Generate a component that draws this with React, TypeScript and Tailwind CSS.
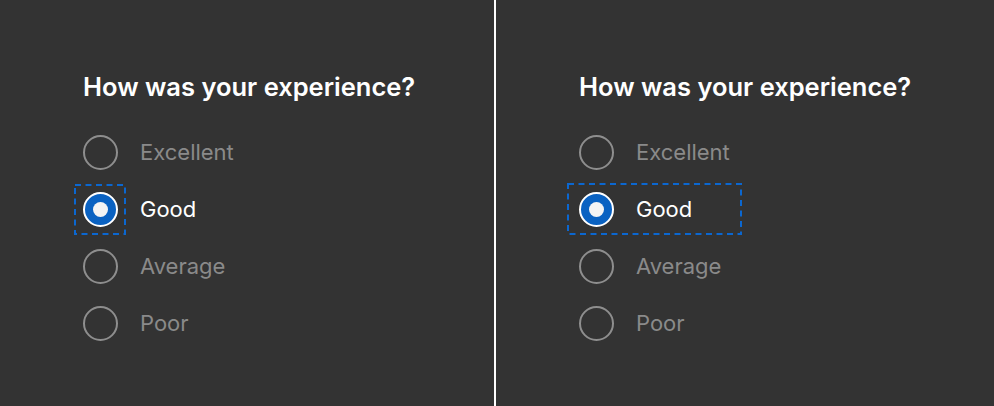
import React from 'react';

const options = ['Excellent', 'Good', 'Average', 'Poor'];

function FocusRing({ width, height }: { width: number; height: number }) {
  return (
    <svg width={width} height={height} className="pointer-events-none" fill="none">
      <rect x="1" y="1" width={width - 2} height={height - 2} stroke="#0b67d0" strokeWidth="2" strokeDasharray="6 4.5" />
    </svg>
  );
}

function Radio({ checked }: { checked: boolean }) {
  if (checked) {
    return (
      <div className="w-[35px] h-[35px] rounded-full border-2 border-white bg-[#0a62c2] flex items-center justify-center shrink-0">
        <div className="w-[15px] h-[15px] rounded-full bg-[#f4f4f4]" />
      </div>
    );
  }
  return <div className="w-[35px] h-[35px] rounded-full border-2 border-[#8e8e8e] shrink-0" />;
}

function Panel({ wideFocus, className }: { wideFocus: boolean; className: string }) {
  return (
    <div className={`${className} pl-[83px] pt-[71px]`}>
      <h2 className="text-[25.5px] leading-[32px] font-semibold text-white">How was your experience?</h2>
      <div className="mt-[21px] flex flex-col">
        {options.map((label) => {
          const checked = label === 'Good';
          return (
            <div key={label} className="relative h-[57px] flex items-center gap-[22px]">
              <div className="relative">
                <Radio checked={checked} />
                {checked && !wideFocus && (
                  <div className="absolute -left-[9px] -top-[8px]">
                    <FocusRing width={52} height={51} />
                  </div>
                )}
              </div>
              <span className={`text-[22px] ${checked ? 'text-white' : 'text-[#8a8a8a]'}`}>{label}</span>
              {checked && wideFocus && (
                <div className="absolute -left-[12px] top-[2px]">
                  <FocusRing width={175} height={52} />
                </div>
              )}
            </div>
          );
        })}
      </div>
    </div>
  );
}

export default function App() {
  return (
    <div className="w-[994px] h-[406px] bg-[#333333] flex font-['Inter','Liberation_Sans',sans-serif]">
      <Panel wideFocus={false} className="w-[494px] shrink-0" />
      <div className="w-[2px] bg-white" />
      <Panel wideFocus={true} className="flex-1" />
    </div>
  );
}
